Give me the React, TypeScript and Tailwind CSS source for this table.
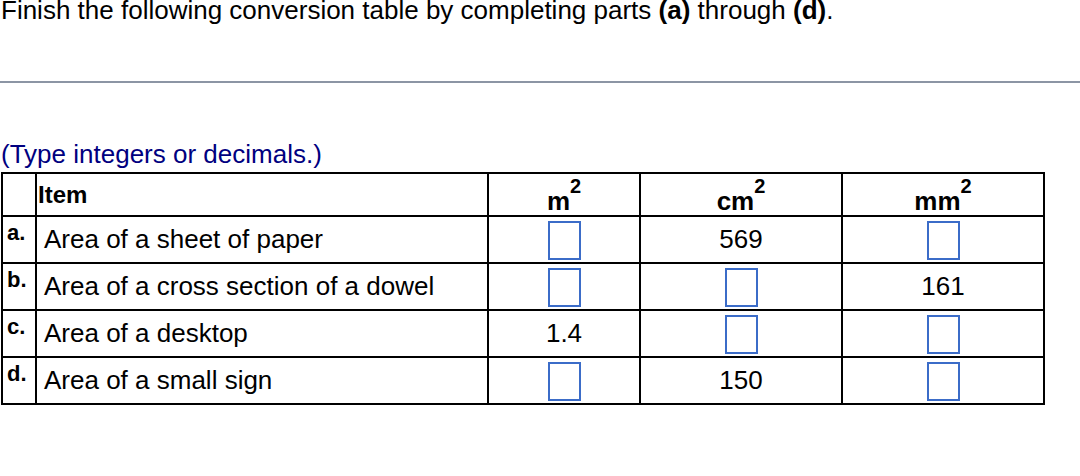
import React from 'react';

type Row = {
  label: string;
  item: string;
  values: (string | null)[];
};

const units = ['m', 'cm', 'mm'];

const rows: Row[] = [
  { label: 'a.', item: 'Area of a sheet of paper', values: [null, '569', null] },
  { label: 'b.', item: 'Area of a cross section of a dowel', values: [null, null, '161'] },
  { label: 'c.', item: 'Area of a desktop', values: ['1.4', null, null] },
  { label: 'd.', item: 'Area of a small sign', values: [null, '150', null] },
];

const AnswerBox: React.FC = () => (
  <span className="inline-block w-[33px] h-[39px] border-2 border-[#3b6cc8] bg-white align-middle" />
);

const App: React.FC = () => {
  return (
    <div className="w-[1080px] h-[476px] bg-white text-black overflow-hidden font-['Liberation_Sans',Arial,sans-serif]">
      {/* Instructions */}
      <p className="text-[26px] leading-[20px] pl-[1px] whitespace-nowrap">
        Finish the following conversion table by completing parts <b>(a)</b> through <b>(d)</b>.
      </p>

      <div className="mt-[61px] h-[2px] bg-[#8c95a4]" />

      <p className="mt-[56px] pl-[1px] text-[26px] leading-[30px] text-[#000080]">
        (Type integers or decimals.)
      </p>

      {/* Conversion table */}
      <table className="mt-[3px] ml-[1px] w-[1043px] table-fixed border-collapse border-2 border-black">
        <colgroup>
          <col className="w-[34px]" />
          <col className="w-[452px]" />
          <col className="w-[152px]" />
          <col className="w-[202px]" />
          <col className="w-[202px]" />
        </colgroup>
        <thead>
          <tr className="h-[43px]">
            <th className="border-2 border-black p-0" />
            <th className="border-2 border-black p-0 pl-[1px] text-left align-middle text-[24px] font-bold">Item</th>
            {units.map((u) => (
              <th key={u} className="border-2 border-black p-0 text-center align-middle text-[26px] font-bold leading-[26px]">
                {u}
                <span className="text-[20px] align-[17px] leading-none">2</span>
              </th>
            ))}
          </tr>
        </thead>
        <tbody>
          {rows.map((row) => (
            <tr key={row.label} className="h-[47px]">
              <td className="border-2 border-black p-0 pt-[3px] pl-[4px] align-top text-[22px] leading-[26px] font-bold">
                {row.label}
              </td>
              <td className="border-2 border-black p-0 pl-[7px] align-middle text-[26px] whitespace-nowrap">
                {row.item}
              </td>
              {row.values.map((v, i) => (
                <td key={i} className="border-2 border-black p-0 text-center align-middle text-[26px]">
                  {v ?? <AnswerBox />}
                </td>
              ))}
            </tr>
          ))}
        </tbody>
      </table>
    </div>
  );
};

export default App;
